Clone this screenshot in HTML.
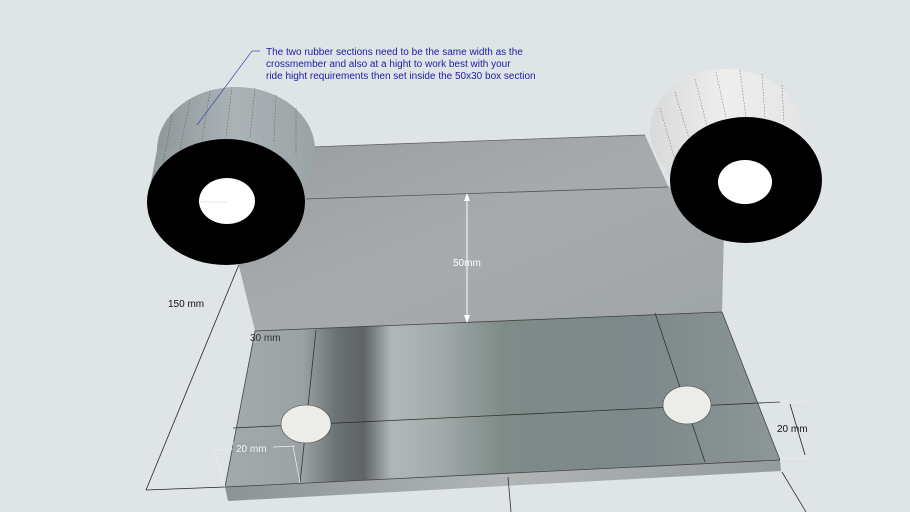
<!DOCTYPE html>
<html><head><meta charset="utf-8"><style>
html,body{margin:0;padding:0;background:#dfe5e7;}
svg{display:block;font-family:"Liberation Sans",sans-serif;}
</style></head><body>
<svg width="910" height="512" viewBox="0 0 910 512" xmlns="http://www.w3.org/2000/svg">
<defs>
<linearGradient id="wall" x1="0" y1="0" x2="1" y2="1">
<stop offset="0" stop-color="#9a9d9f"/><stop offset="0.5" stop-color="#a7abad"/><stop offset="1" stop-color="#9fa4a6"/>
</linearGradient>
<linearGradient id="plate" x1="0" y1="0" x2="1" y2="0">
<stop offset="0" stop-color="#a3abae"/><stop offset="0.14" stop-color="#9aa2a4"/><stop offset="0.2" stop-color="#6c7274"/><stop offset="0.25" stop-color="#5f6466"/><stop offset="0.3" stop-color="#b0b7b8"/><stop offset="0.38" stop-color="#a3acab"/><stop offset="0.5" stop-color="#7f8b88"/><stop offset="0.75" stop-color="#7d888a"/><stop offset="1" stop-color="#8d9798"/>
</linearGradient>
<linearGradient id="edge" x1="0" y1="0" x2="1" y2="0">
<stop offset="0" stop-color="#8d9395"/><stop offset="0.5" stop-color="#b0b5b6"/><stop offset="1" stop-color="#959b9c"/>
</linearGradient>
<linearGradient id="rl" x1="0" y1="0" x2="1" y2="0">
<stop offset="0" stop-color="#8f989b"/><stop offset="0.5" stop-color="#aab3b6"/><stop offset="1" stop-color="#9aa3a6"/>
</linearGradient>
<linearGradient id="rr" x1="0" y1="0" x2="1" y2="0">
<stop offset="0" stop-color="#d8dad9"/><stop offset="0.5" stop-color="#eeeeed"/><stop offset="1" stop-color="#e4e5e4"/>
</linearGradient>
</defs>
<!-- dimension line left -->
<line x1="240" y1="262" x2="146" y2="490" stroke="#222" stroke-width="0.8"/>
<line x1="146" y1="490" x2="225" y2="487" stroke="#222" stroke-width="0.8"/>
<text x="168" y="307" font-size="10" fill="#111">150 mm</text>
<!-- wall -->
<polygon points="305,147 645,135 668,186 724,230 722,313 255,331 238,262 300,200" fill="url(#wall)"/>
<line x1="305" y1="199" x2="668" y2="187" stroke="#555" stroke-width="0.8"/>
<line x1="310" y1="147" x2="645" y2="135" stroke="#666" stroke-width="0.8"/>
<!-- plate -->
<polygon points="255,331 722,312 780,460 225,487" fill="url(#plate)"/>
<polygon points="225,487 780,460 781,471 228,501" fill="url(#edge)"/>
<line x1="255" y1="331" x2="722" y2="312" stroke="#444" stroke-width="0.8"/>
<line x1="225" y1="487" x2="780" y2="460" stroke="#444" stroke-width="0.8"/>
<line x1="233" y1="428" x2="780" y2="402" stroke="#333" stroke-width="0.8"/>
<line x1="316" y1="330" x2="300" y2="483" stroke="#333" stroke-width="0.8"/>
<line x1="655" y1="313" x2="705" y2="462" stroke="#333" stroke-width="0.8"/>
<line x1="255" y1="331" x2="225" y2="487" stroke="#444" stroke-width="0.8"/>
<line x1="722" y1="312" x2="780" y2="460" stroke="#444" stroke-width="0.8"/>
<line x1="508" y1="477" x2="511" y2="512" stroke="#333" stroke-width="0.8"/>
<ellipse cx="306" cy="424" rx="25" ry="19" fill="#ecece8" stroke="#444" stroke-width="0.6"/>
<ellipse cx="687" cy="405" rx="24" ry="19" fill="#ecece8" stroke="#444" stroke-width="0.6"/>
<text x="250" y="341" font-size="10" fill="#333">30 mm</text>
<!-- 20mm dims -->
<line x1="215" y1="450" x2="295" y2="446" stroke="#eee" stroke-width="0.8"/>
<line x1="213" y1="449" x2="225" y2="487" stroke="#eee" stroke-width="0.7"/>
<line x1="293" y1="446" x2="300" y2="483" stroke="#eee" stroke-width="0.7"/>
<rect x="233" y="442" width="40" height="11" fill="#9da5a6"/>
<text x="236" y="452" font-size="10" fill="#f4f4f4">20 mm</text>
<line x1="780" y1="402" x2="807" y2="402" stroke="#eee" stroke-width="0.7"/>
<line x1="780" y1="458" x2="808" y2="458" stroke="#eee" stroke-width="0.7"/>
<line x1="790" y1="404" x2="805" y2="455" stroke="#222" stroke-width="0.8"/>
<text x="777" y="432" font-size="10" fill="#111">20 mm</text>
<line x1="782" y1="472" x2="806" y2="512" stroke="#333" stroke-width="0.8"/>
<!-- 50mm -->
<line x1="467" y1="196" x2="467" y2="320" stroke="#fff" stroke-width="1"/>
<polygon points="467,193 464,201 470,201" fill="#fff"/>
<polygon points="467,323 464,315 470,315" fill="#fff"/>
<text x="453" y="266" font-size="10" fill="#fff">50mm</text>
<!-- left roller -->
<ellipse cx="236" cy="150" rx="79" ry="63" fill="url(#rl)"/>
<polygon points="147,202 157,150 315,150 305,202" fill="url(#rl)"/>
<g stroke="#555" stroke-width="0.5" stroke-dasharray="1.5,1.5">
<line x1="172" y1="115" x2="162" y2="170"/><line x1="190" y1="100" x2="180" y2="150"/><line x1="210" y1="91" x2="202" y2="140"/><line x1="232" y1="87" x2="226" y2="137"/><line x1="255" y1="88" x2="250" y2="138"/><line x1="276" y1="95" x2="274" y2="143"/><line x1="296" y1="108" x2="296" y2="156"/>
</g>
<ellipse cx="226" cy="202" rx="79" ry="63" fill="#000"/>
<ellipse cx="227" cy="201" rx="28" ry="23" fill="#fff"/>
<line x1="198" y1="202" x2="228" y2="202" stroke="#999" stroke-width="0.6" stroke-dasharray="1,1"/>
<!-- right roller -->
<ellipse cx="726" cy="131" rx="76" ry="62" fill="url(#rr)"/>
<polygon points="670,180 650,131 802,131 822,180" fill="url(#rr)"/>
<g stroke="#666" stroke-width="0.5" stroke-dasharray="1.5,1.5">
<line x1="660" y1="108" x2="675" y2="160"/><line x1="675" y1="92" x2="690" y2="142"/><line x1="695" y1="79" x2="708" y2="130"/><line x1="716" y1="72" x2="727" y2="122"/><line x1="740" y1="70" x2="746" y2="118"/><line x1="762" y1="74" x2="765" y2="118"/><line x1="782" y1="85" x2="784" y2="122"/>
</g>
<ellipse cx="746" cy="180" rx="76" ry="63" fill="#000"/>
<ellipse cx="745" cy="182" rx="27" ry="22" fill="#fff"/>
<!-- annotation -->
<polyline points="260,51 252,51 197,125" fill="none" stroke="#4a4aaa" stroke-width="0.7"/>
<g font-size="10" fill="#1c1ca8">
<text x="266" y="55">The two rubber sections need to be the same width as the</text>
<text x="266" y="67">crossmember and also at a hight to work best with your</text>
<text x="266" y="79">ride hight requirements then set inside the 50x30 box section</text>
</g>
</svg>
</body></html>
